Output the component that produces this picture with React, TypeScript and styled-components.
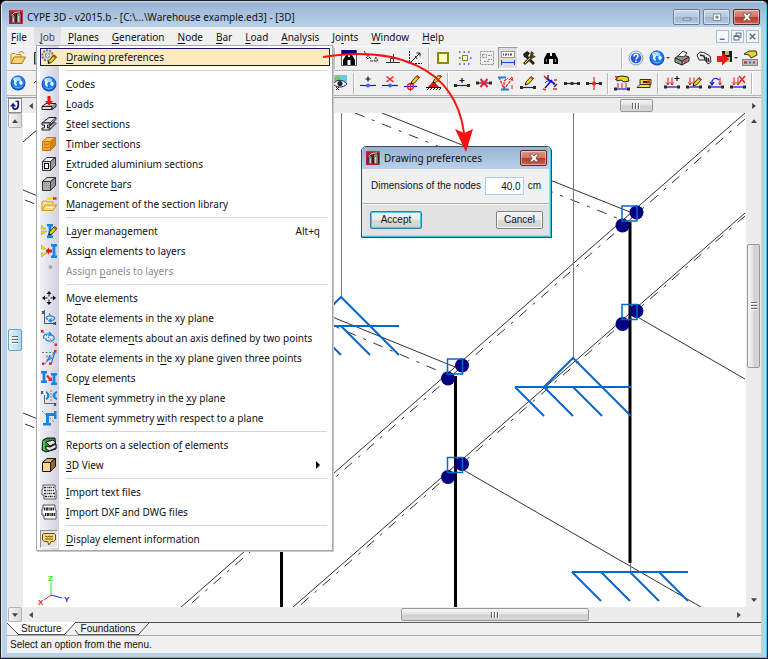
import React from "react";
import styled, { createGlobalStyle, css } from "styled-components";

const UI = `"Noto Sans", "Open Sans", sans-serif`;
const PLAIN = `"Liberation Sans", Arial, sans-serif`;

const Global = createGlobalStyle`
  *, *::before, *::after { box-sizing: border-box; }
  html, body, #root { height: 100%; margin: 0; }
  body { font: 10px/14px ${UI}; color: #111; background: #000; overflow: hidden; }
  button, input { font: inherit; color: inherit; margin: 0; }
  button { padding: 0; border: 0; background: none; cursor: default; }
  svg { display: block; flex: none; }
  u { text-underline-offset: 2px; text-decoration-thickness: 1px; }
`;

/* ---------- icons ---------- */

const Pencil = ({ x = 0, y = 0 }: { x?: number; y?: number }) => (
  <g transform={`translate(${x} ${y})`}>
    <path d="M1 9 2 6 7 0.5 9.5 2.5 4.5 8Z" fill="#e8d800" stroke="#222" strokeWidth="0.9" />
    <path d="M7 0.5 9.5 2.5 8.4 3.8 6 1.7Z" fill="#d33" />
    <path d="M1 9 1.6 7.2 2.8 8.3Z" fill="#000" />
  </g>
);
const Beam = ({ x = 0, h = 14 }: { x?: number; h?: number }) => (
  <path transform={`translate(${x} 1)`} d={`M0 0H6V2.5H4.4V${h - 2.5}H6V${h}H0V${h - 2.5}H1.6V2.5H0Z`} fill="#1484e8" />
);
const Box = ({ front, side, top, line }: Record<"front" | "side" | "top" | "line", string>) => (
  <g stroke={line} strokeWidth="1" strokeLinejoin="round">
    <path d="M1.5 5.5H9.5V14.5H1.5Z" fill={front} />
    <path d="M1.5 5.5 6 1.5H14.5L9.5 5.5Z" fill={top} />
    <path d="M9.5 5.5 14.5 1.5V9.5L9.5 14.5Z" fill={side} />
  </g>
);
const Bar = ({ y = 11 }: { y?: number }) => (
  <>
    <path d={`M1 ${y}H15`} stroke="#11e" strokeWidth="1.2" />
    <path d={`M0 ${y - 1.5}H3V${y + 1.5}H0ZM13 ${y - 1.5}H16V${y + 1.5}H13Z`} fill="#332c08" />
  </>
);
const Downs = ({ xs, y = 9, c = "#e11" }: { xs: number[]; y?: number; c?: string }) => (
  <>
    {xs.map((x) => (
      <path key={x} d={`M${x} ${y - 8}V${y - 1}M${x - 1.5} ${y - 3}L${x} ${y - 0.5}L${x + 1.5} ${y - 3}`} fill="none" stroke={c} />
    ))}
  </>
);
const Binoc = ({ c = "#000" }: { c?: string }) => (
  <path d="M4 3H7V6H9V3H12L15 9V14H10V9H6V14H1V9Z" fill={c} />
);
const Folder = () => (
  <>
    <path d="M1 13.5V4.5L2 3.5H5L6 4.5H11V7" fill="#fbe6a0" stroke="#b98a2a" />
    <path d="M1 13.5 4 7H15.5L12 13.5Z" fill="#f7cf72" stroke="#a97818" />
    <path d="M9 3Q12 0 14 3.5" stroke="#a97818" fill="none" />
  </>
);

const icons: Record<string, React.ReactNode> = {
  app: (
    <>
      <rect width="16" height="16" fill="#b4202c" />
      <path d="M0 0H16V16" fill="none" stroke="#e0555c" />
      <path d="M2.5 14V7L5 4.5 7 6.5V14M8.5 14V4L12.5 2 14 4.5V14" fill="#8c8a86" stroke="#2a1515" strokeWidth="1.2" />
      <path d="M3 6.5 6 3 13 2M5 9V14M11 7V14" stroke="#e8e2dc" fill="none" />
    </>
  ),
  gear: (
    <>
      <circle cx="6.5" cy="6.5" r="5.2" fill="#d8d8d8" stroke="#777" strokeWidth="2" strokeDasharray="2 1.2" />
      <circle cx="6.5" cy="6.5" r="2" fill="#fff" stroke="#888" />
      <path d="M3 3 10 10M10 3 3 10" stroke="#999" strokeWidth=".6" />
      <Pencil x={6} y={5.5} />
    </>
  ),
  globe: (
    <>
      <circle cx="8" cy="8" r="7.5" fill="#1050c0" />
      <circle cx="8" cy="7.3" r="6.5" fill="#1c7cf0" />
      <ellipse cx="7" cy="4" rx="4" ry="2" fill="#a8dcff" />
      <path d="M4 5 6 4 7 7 6 8 7 10 6 11 4 9ZM9 8 10 5 12 6 13 8 11 10.500Z" fill="#e4f6ff" />
      <path d="M3 11Q8 16 13 11Q8 13 3 11Z" fill="#48b0ff" />
    </>
  ),
  loads: (
    <>
      <path d="M1 10.5 5 7.5H15L11 10.5V13.5H1Z" fill="#ddd" stroke="#222" />
      <path d="M1 10.5H11V13.5L15 10.5V8" fill="#999" stroke="#222" />
      <path d="M6.5 0H9.5V5H12L8 9.5 4 5H6.5Z" fill="#e81010" />
    </>
  ),
  steel: (
    <g stroke="#222" strokeLinejoin="round">
      <path d="M1 7 8 1.5H15L9 7Z" fill="#ddd" />
      <path d="M6.5 12 13.5 6 15 7.5 9 13.5Z" fill="#aaa" />
      <path d="M1 7H9V9H6.5V12H9V14H1V12H3.5V9H1Z" fill="#eee" />
      <path d="M9 9 15 3.5V1.5" fill="none" />
    </g>
  ),
  timber: (
    <>
      <Box front="#f5a32a" side="#d98310" top="#ffc45c" line="#c8780c" />
      <path d="M3 8Q6 10 8 7.5M3 11Q6 13 8 10.5" stroke="#c8760c" fill="none" />
    </>
  ),
  aluminium: (
    <>
      <Box front="#ddd" side="#999" top="#eee" line="#333" />
      <rect x="3.5" y="7.5" width="4" height="5" fill="#fff" stroke="#111" />
    </>
  ),
  concrete: (
    <>
      <Box front="#b0b0b0" side="#909090" top="#d4d4d4" line="#333" />
      <path d="M3 7.5H8M3.5 9.5H9M3 11.5H8" stroke="#8a8a8a" strokeDasharray="1 1" />
    </>
  ),
  library: (
    <>
      <path d="M1 14V6L2 5H5L6 6H12V8" fill="#fbe6a0" stroke="#d8901a" />
      <path d="M1 14.5 4 9H15.5L12 14.5Z" fill="#fbd68a" stroke="#d8901a" />
      <path d="M6 2.5H12" stroke="#f4e000" strokeWidth="2.5" />
      <path d="M12 2.5H15.5" stroke="#e22" strokeWidth="2.5" />
      <path d="M5 11.5H12" stroke="#fff" />
    </>
  ),
  layer: (
    <>
      <path d="M0 2 5 6 0 6ZM0 8H6L0 12Z" fill="#f5e400" stroke="#8a8a6a" strokeWidth=".5" />
      <Beam x={6} />
      <Pencil x={6.5} y={3} />
    </>
  ),
  assign: (
    <>
      <path d="M0 2 5 6 0 6ZM0 10H6L0 14Z" fill="#f5e400" stroke="#8a8a6a" strokeWidth=".5" />
      <Beam x={10} />
      <path d="M4.5 8 8 4.5V6.5H11V9.5H8V11.5Z" fill="#e31414" />
    </>
  ),
  dot: <circle cx="9.5" cy="4" r="2" fill="#aaa" />,
  move: (
    <path
      d="M8 1 10.5 4H5.5ZM8 15 10.5 12H5.5ZM1 8 4 5.5V10.5ZM15 8 12 5.5V10.5ZM7.5 4H8.5V6.5H7.5ZM7.5 9.5H8.5V12H7.5ZM4 7.5H6.5V8.5H4ZM9.5 7.5H12V8.5H9.5Z"
      fill="#111"
    />
  ),
  rotxy: (
    <>
      <path d="M3.5 0V13.5H15" stroke="#555" fill="none" />
      <path d="M1 1 3 4M3 1 1 4M12.5 12 15 15M15 12 12.5 15" stroke="#333" />
      <path d="M7 9.5C3 8 7 5.5 10 6C16 7 14 11 9 10.5M10.5 8.5 8 10.5 10.5 12.5M8 3.5 10 6" stroke="#1484e8" fill="none" strokeWidth="1.2" />
    </>
  ),
  rotaxis: (
    <>
      <path d="M2 2 14 14" stroke="#777" strokeDasharray="2 1.5" />
      <path d="M3 9C1 4 7 3 10 4.5C15 7 14 11 9 11C6 11 4 10 5 8M8 2 11 5 7 6" stroke="#1484e8" fill="none" strokeWidth="1.2" />
      <path d="M0 0H2.5V2.5H0ZM13.5 13.5H16V16H13.5Z" fill="#e22" />
    </>
  ),
  rot3: (
    <>
      <path d="M1 2.5H13" stroke="#777" strokeDasharray="2 1.5" />
      <path d="M13 3 4 14M6 5V12" stroke="#777" strokeDasharray="3 1" />
      <path d="M14 2 10 14M9 5 7 10 11 8" stroke="#1484e8" fill="none" strokeWidth="1.3" />
      <path d="M13 0H15.5V2.5H13ZM1 12.5H3.5V15H1ZM8 12.5H10.5V15H8Z" fill="#e22" />
    </>
  ),
  copy: (
    <>
      <Beam x={0} h={12} />
      <g transform="translate(0 2)"><Beam x={10} h={12} /></g>
      <path d="M5 6 7 5 11 10 9 11ZM11 11H7L11 7Z" fill="#e22" />
    </>
  ),
  symxy: (
    <>
      <path d="M3.5 5V13.5H15" stroke="#666" fill="none" />
      <path d="M0 1 2 4M2 1 0 4M13 13 15 16M15 13 13 16" stroke="#333" />
      <path d="M5 1Q8 2 8.5 5.5Q8 9 5 10V8L6 7V4L5 3ZM16 1Q12 2 11.5 5.5Q12 9 16 10V8L14.5 7V4L16 3Z" fill="#1484e8" />
      <path d="M10 0V12" stroke="#777" strokeDasharray="2 1" />
    </>
  ),
  symplane: (
    <>
      <path d="M1 1 14 13" stroke="#777" strokeDasharray="2 1.5" />
      <path d="M5 3H13V1H15.5V9H13V6H8V13H10V15.5H2V13H5Z" fill="#1484e8" />
    </>
  ),
  reports: (
    <>
      <path d="M2 3 6 1H14L15 12 5 15 1 13Z" fill="#2c9a3a" stroke="#111" />
      <path d="M5 5 12 3 15 6 9 9ZM5 9 9 10 15 7V11L8 14 5 12Z" fill="#ddd" stroke="#111" />
      <path d="M3 4V13" stroke="#5f5" />
    </>
  ),
  view3d: <Box front="#f8d890" side="#8a6a30" top="#d9b060" line="#1c1408" />,
  textfile: (
    <>
      <path d="M2 1H14V5L15 6V15H3V11H1V5H2Z" fill="#fff" stroke="#555" />
      <path d="M3 3.5H13M3 6.5H13M3 9.5H14M4 12.5H14" stroke="#222" strokeWidth="1.5" strokeDasharray="2 .7 1 .8" />
    </>
  ),
  dxf: (
    <>
      <path d="M2 1H14V5L15 6V15H3V11H1V5H2Z" fill="#fff" stroke="#555" />
      <path d="M3 5H13M4 10.5H14" stroke="#222" strokeWidth="3" strokeDasharray="1.2 .7 2 .6" />
    </>
  ),
  info: (
    <>
      <path d="M2.5 2.5H13.5L14.5 4V9L12.5 10.5H10L8 14 6.5 10.5H3.5L1.5 9V4Z" fill="#ffd97a" stroke="#6a4c10" />
      <path d="M4 5 6.5 6 8 5 10 6 12 5M4 8H12" stroke="#6a4c10" fill="none" />
    </>
  ),
  open: <Folder />,
  newjob: <path d="M2.5 2.5H12V14H2.5Z" fill="#8fc46e" stroke="#234" />,
  half: <path d="M2 8 5 5M4 12C8 7 10 12 6 14H12M8 5H12" fill="none" stroke="#111" />,
  dxfview: (
    <>
      <rect x="0" y="0" width="16" height="16" fill="#fff" />
      <rect x="0" y="0" width="16" height="4" fill="#000080" />
      <path d="M5 5H7V7H9V5H11L14 10V15H9.5V10H6.5V15H2V10Z" fill="#000" />
      <path d="M.5 0V15.5H15.5V0" stroke="#555" fill="none" />
    </>
  ),
  cable: (
    <path d="M1 1 5 7M3 7 5 9 7 7M7 11H15L13 7 11 11M8 9 5 5" fill="none" stroke="#333" strokeDasharray="3 1" />
  ),
  angle: <path d="M1 12.5H15M8.5 12V4M5.5 12V8.5H8" stroke="#333" fill="none" />,
  polar: (
    <>
      <path d="M2.5 1V13.5H15" stroke="#222" fill="none" strokeDasharray="2 1" />
      <path d="M3 13 13 3M9.5 3H13V6.5M8 6 10 9" stroke="#222" fill="none" />
    </>
  ),
  square: <rect x="3" y="3" width="10" height="10" fill="#fff8c8" stroke="#8a8a10" strokeWidth="2" />,
  grid: (
    <>
      <path d="M2 2H15M2 8H4M13 8H15M2 14H15" stroke="#44f" strokeWidth="1.5" strokeDasharray="1.5 3" />
      <rect x="5.5" y="5.5" width="5" height="5" fill="#fff8c8" stroke="#8a8a10" />
    </>
  ),
  region: (
    <g stroke="#888" fill="none" strokeDasharray="2 1">
      <rect x="1.5" y="1.5" width="13" height="13" />
      <rect x="3.5" y="4.5" width="4" height="3" />
      <path d="M9 5.5H13M9 9.5H13M5 11.5H11" />
    </g>
  ),
  dims: (
    <>
      <rect x="1.5" y="1.5" width="13" height="6" fill="#fff" stroke="#999" />
      <path d="M3 4.5H13" stroke="#555" strokeWidth="2" strokeDasharray="1 1 2 1" />
      <path d="M1 12.5H15M1.5 10V15M14.5 10V15" stroke="#14e" fill="none" />
    </>
  ),
  tools: (
    <>
      <path d="M2 4 6 1 9 3 7 6 14 13 12 15 5 8 3 7Z" fill="#222" />
      <path d="M10 1 13 3 12 5 15 7 12 8 4 15 2 13 9 6Z" fill="#4a4012" />
      <path d="M4 13 9 8" stroke="#d8c860" />
    </>
  ),
  find: <><Binoc /><path d="M3.5 9V12M12.5 9V12" stroke="#888" /></>,
  help: (
    <>
      <circle cx="8" cy="8" r="7" fill="#e8ecfb" stroke="#8d96b8" />
      <circle cx="8" cy="8" r="5.3" fill="#2a5ae0" />
      <path d="M6 6.5C6 3.5 10.5 3.5 10 6.5C9.8 7.5 8.2 7.8 8 9.5M8 10.5V12" stroke="#fff" strokeWidth="1.5" fill="none" />
    </>
  ),
  printer: (
    <>
      <path d="M1 8 7 4 15 7V11L8 15 1 12Z" fill="#999" stroke="#222" />
      <path d="M4 6 9 1 13 3 10 7Z" fill="#fff" stroke="#333" />
      <path d="M1 8 8 11 15 7M8 11V15" stroke="#222" fill="none" />
      <path d="M3 11 6 12.5" stroke="#3c3" />
      <path d="M10 12 13 10.5" stroke="#e33" strokeWidth="1.5" />
    </>
  ),
  cards: (
    <>
      <path d="M1 5 4 2 9 3 14 6 15 12 12 14 9 10 3 10Z" fill="#e8e8e8" stroke="#333" />
      <path d="M4 5 8 6 9 10M10 7 11 12M12 8 13 12" stroke="#222" fill="none" strokeWidth="1.3" />
      <path d="M5 3.5H8" stroke="#fff" />
    </>
  ),
  exportjob: (
    <>
      <path d="M5 1H15V12H5Z" fill="#222" />
      <path d="M8 1H12V5H8ZM7 7H13V12H7Z" fill="#c8b870" />
      <path d="M0 6H5V2.5L12 9 5 15.5V12H0Z" fill="#f01818" />
    </>
  ),
  palette: (
    <>
      <rect x=".5" y="9.5" width="15" height="6" fill="#bbb" stroke="#888" />
      <path d="M2 12.5H5" stroke="#c22" strokeWidth="2" />
      <path d="M7 12.5H9" stroke="#46e" strokeWidth="2" />
      <path d="M11 12.5H13" stroke="#d33" strokeWidth="2" />
      <path d="M2 4 7 1H14L15 5 9 8 7 5Z" fill="#e8d820" stroke="#333" />
    </>
  ),
  eye: (
    <>
      <path d="M1 0H15V9L10 5Z" fill="#5ccfd8" />
      <path d="M0 2 6 1 9 5 1 7Z" fill="#7ac860" />
      <path d="M1 9C5 4 11 4 15 9C11 13 5 13 1 9Z" fill="#fff" stroke="#222" />
      <circle cx="8" cy="8.5" r="2.6" fill="#225" />
      <path d="M4 12 7 15M7 12 4 15" stroke="#222" />
    </>
  ),
  nodeadd: (
    <>
      <path d="M0 10.5H16" stroke="#11e" strokeWidth="1.2" />
      <circle cx="8" cy="10.5" r="2" fill="#46f" />
      <path d="M8 1.5V6.5M5.5 4H10.5" stroke="#111" strokeWidth="1.2" />
    </>
  ),
  nodedel: (
    <>
      <path d="M0 10.5H16" stroke="#11e" strokeWidth="1.2" />
      <circle cx="8" cy="10.5" r="2" fill="#46f" />
      <path d="M4.5 1.5 11.5 7M11.5 1.5 4.5 7" stroke="#e22" strokeWidth="1.5" />
    </>
  ),
  nodeedit: (
    <>
      <path d="M0 11.5H13" stroke="#11e" strokeWidth="1.2" />
      <circle cx="6.5" cy="11.5" r="3" fill="none" stroke="#e22" strokeWidth="1.3" />
      <path d="M6.5 8V16" stroke="#e22" />
      <Pencil x={6} y={0} />
    </>
  ),
  support: (
    <>
      <path d="M7.5 6 13 12H2Z" fill="#e81010" />
      <path d="M0 12.5H15M1 15 3 13M4 15 6 13M7 15 9 13M10 15 12 13M13 15 15 13" stroke="#111" />
      <Pencil x={6} y={-1} />
    </>
  ),
  baradd: <><Bar y={10.5} /><path d="M8 3V8M5.5 5.5H10.5" stroke="#111" strokeWidth="1.2" /></>,
  bardel: <><Bar y={8} /><path d="M4.5 4 11.5 12M11.5 4 4.5 12" stroke="#e22" strokeWidth="2" /></>,
  bargen: (
    <>
      <path d="M1 2 6 14 14 4M6 14V6L10 3" stroke="#e22" fill="none" strokeDasharray="3 1" strokeWidth="1.3" />
      <path d="M0 2.5H8M3 14.5H11" stroke="#1484e8" strokeWidth="2" />
      <path d="M11 5 14 2 15 6M14 10V14" stroke="#e22" fill="none" />
    </>
  ),
  baredit: <><Bar y={12.5} /><Pencil x={4} y={1} /></>,
  barrotate: (
    <>
      <path d="M3 13 10 5M4 3 13 9" stroke="#11e" strokeWidth="1.6" />
      <path d="M3 8C6 4 11 6 12 10" stroke="#11e" fill="none" />
      <path d="M2 1 5 4M1 14 4 15M11 14H15M12 5 15 5" stroke="#e22" strokeWidth="1.5" />
      <path d="M6 0V4M12 12 15 9" stroke="#222" strokeWidth="1.3" />
    </>
  ),
  barsplit: <><Bar y={8.5} /><rect x="6.5" y="7" width="3" height="3" fill="#332c08" /></>,
  barcross: <><Bar y={8.5} /><path d="M8 2V15" stroke="#e22" strokeWidth="1.2" /><circle cx="8" cy="8.5" r="2" fill="#e22" /></>,
  describe: (
    <>
      <path d="M2 2 8 1 14 2 15 6 10 7 7 5 3 6Z" fill="#e8d820" stroke="#222" />
      <path d="M1 1 4 4M1 5 4 2" stroke="#e22" />
      <path d="M4 8V13M8 8V13M12 8V13" stroke="#e11" />
      <Bar y={14} />
    </>
  ),
  material: (
    <>
      <path d="M4 9.5V4.5H15V9.5Z" fill="#e8d820" stroke="#333" />
      <path d="M1 12.5 4 9.5H14V12.5Z" fill="#f0e430" stroke="#333" />
      <path d="M7 6H11V8H7Z" fill="#222" />
      <path d="M11 5.5H14V8.5H11Z" fill="#d22" />
    </>
  ),
  loadadd: <><Bar y={12} /><Downs xs={[4, 8]} y={10.5} /><path d="M13 1V6M10.5 3.5H15.5" stroke="#111" strokeWidth="1.2" /></>,
  loadedit: <><Bar y={12} /><Downs xs={[4, 8]} y={10.5} /><Pencil x={6} y={2} /></>,
  loadcopy: <><Bar y={12} /><Downs xs={[12]} y={10.5} /><path d="M4 10V6C6 2 9 3 11 5M2 7 4 10 6 7" stroke="#11e" fill="none" strokeWidth="1.2" /></>,
  loaddel: <><Bar y={12} /><Downs xs={[4, 8]} y={10.5} /><path d="M9 1 15 8M15 1 9 8" stroke="#e22" strokeWidth="1.5" /></>,
  reset: (
    <>
      <path d="M12 1V9C11 15 4 14 4 9" fill="none" stroke="#16168c" strokeWidth="2.5" />
      <path d="M0 9.5 4.5 4 9 9.5ZM8 1H12V3H8Z" fill="#16168c" />
    </>
  ),
  minimize: <path d="M3 9.5H13V12H3Z" fill="#fff" stroke="#566" />,
  maximize: <path d="M3 4H13V12.5H3ZM6.5 7H9.5V9.5H6.5Z" fill="#fff" fillRule="evenodd" stroke="#566" />,
  close: <path d="M2 3H6L8 5.5 10 3H14L10.5 8 14 13H10L8 10.5 6 13H2L5.5 8Z" fill="#fff" stroke="#5a3030" strokeWidth=".8" />,
  mdiMin: <path d="M4 12H11" stroke="#5a6b80" strokeWidth="2" />,
  mdiRestore: <path d="M6 6V3H13V9H10M3 7H10V13H3ZM3 8H10" fill="none" stroke="#5a6b80" strokeWidth="1.5" />,
  mdiClose: <path d="M4 4 12 12M12 4 4 12" stroke="#5a6b80" strokeWidth="2" />,
};

const Icon = ({ name, size = 16 }: { name: string; size?: number }) => (
  <svg width={size} height={size} viewBox="0 0 16 16" fill="none" aria-hidden="true">
    {icons[name]}
  </svg>
);

const Mnemonic = ({ text }: { text: string }) => {
  const at = text.indexOf("&");
  if (at < 0) return <>{text}</>;
  return (
    <>
      {text.slice(0, at)}
      <u>{text[at + 1]}</u>
      {text.slice(at + 2)}
    </>
  );
};

/* ---------- window frame ---------- */

const Frame = styled.div`
  position: relative;
  display: flex;
  flex-direction: column;
  height: 100vh;
  border: 1px solid #1d1d22;
  border-radius: 6px 6px 0 0;
  background: #b9d1ea;
  padding: 0 6px 5px;
  box-shadow: inset -1px -1px 0 #35c8e0, inset 1px 1px 0 #e6eef8;
`;

const TitleBar = styled.header`
  display: flex;
  align-items: center;
  flex: none;
  gap: 4px;
  height: 26px;
  margin: 0 -5px;
  padding: 5px 6px 0 7px;
  border-radius: 5px 5px 0 0;
  background: linear-gradient(#dfe9f4 0, #98b3d2 2px, #a9c2de 50%, #b9d1ea);
`;

const Title = styled.h1`
  flex: 1;
  margin: 0;
  font: 10px/16px ${UI};
`;

const Captions = styled.div`
  display: flex;
  gap: 3px;
`;

const CaptionButton = styled.button<{ $danger?: boolean }>`
  display: flex;
  align-items: center;
  justify-content: center;
  width: 27px;
  height: 16px;
  border: 1px solid ${(p) => (p.$danger ? "#5a2a2a" : "#6b7e94")};
  border-radius: 2px;
  box-shadow: inset 0 0 0 1px rgba(255, 255, 255, 0.45);
  background: ${(p) =>
    p.$danger
      ? "linear-gradient(#dd9a8c, #cf7462 48%, #b43c28 52%, #c9604c)"
      : "linear-gradient(#c9d9ea, #b4c8de 48%, #9cb4cf 52%, #b3cbe4)"};
`;

const Client = styled.div`
  display: flex;
  flex-direction: column;
  flex: 1;
  min-height: 0;
  background: #f0f0f0;
`;

const MenuBar = styled.nav`
  position: relative;
  z-index: 2;
  display: flex;
  flex: none;
  gap: 1px;
  height: 19px;
  padding-right: 2px;
  margin-left: -2px;
`;

const MenuSlot = styled.div`
  position: relative;
  display: flex;
`;

const MenuButton = styled.button<{ $open?: boolean }>`
  padding: 0 6px;
  color: ${(p) => (p.$open ? "#445" : "#111")};
  background: ${(p) => (p.$open ? "linear-gradient(#dcdce2, #e6e6ea)" : "none")};
`;

const MdiButtons = styled.div`
  display: flex;
  align-items: center;
  gap: 2px;
  margin-left: auto;
`;

const MdiButton = styled.button`
  display: flex;
  align-items: center;
  justify-content: center;
  width: 13px;
  height: 13px;
  border: 1px solid #a9bccf;
  background: #f3f8fd;
`;

/* ---------- drop-down menu ---------- */

const Popup = styled.div`
  position: absolute;
  top: 18px;
  left: 2px;
  display: flex;
  flex-direction: column;
  width: 297px;
  padding: 1px 2px 1px 3px;
  border: 1px solid #a8a8ac;
  background: linear-gradient(90deg, #fff 3px, #efeff6 3px, #d2d2e0 22px, #fff 22px);
  box-shadow: 1px 1px 0 #c8c8cc;
`;

const Entry = styled.button<{ $hot?: boolean; $off?: boolean }>`
  display: flex;
  align-items: center;
  height: 20px;
  padding: 0 10px 0 0;
  text-align: left;
  color: ${(p) => (p.$off ? "#8c8c8c" : "#111")};
  ${(p) =>
    p.$hot &&
    css`
      height: 18px;
      margin: 1px 0;
      background: #ffe9c0;
      box-shadow: inset 0 0 0 1px #12126e;
    `}
`;

const EntryIcon = styled.span<{ $checked?: boolean }>`
  display: flex;
  align-items: center;
  justify-content: center;
  width: 18px;
  height: 18px;
  margin-right: 8px;
  ${(p) =>
    p.$checked &&
    css`
      border: 1px solid #8e8e98;
      border-right-color: #fff;
      border-bottom-color: #fff;
      background: #e2e2e8;
    `}
`;

const EntryText = styled.span`
  flex: 1;
  white-space: nowrap;
`;

const Divider = styled.hr`
  width: auto;
  height: 1px;
  margin: 3px 3px 3px 26px;
  border: 0;
  background: #d3d3e2;
`;

/* ---------- toolbars ---------- */

const ToolBar = styled.div`
  display: flex;
  align-items: center;
  flex: none;
  height: 25px;
  border-bottom: 1px solid #b4b4b4;
  box-shadow: inset 0 1px 0 #fafafa;
`;

const LeadTools = styled.div<{ $basis: number }>`
  display: flex;
  flex: 0 0 ${(p) => p.$basis}px;
`;

const Push = styled.span`
  margin-left: auto;
`;

const Tool = styled.button<{ $down?: boolean }>`
  display: flex;
  align-items: center;
  justify-content: center;
  flex: none;
  width: 22px;
  height: 22px;
  ${(p) =>
    p.$down &&
    css`
      width: 20px;
      border: 1px solid #9a9a9a;
      border-right-color: #fff;
      border-bottom-color: #fff;
      background: #dedede;
    `}
`;

const SplitTool = styled(Tool)`
  width: 24px;
  gap: 1px;
  &::after {
    content: "";
    border: 2px solid transparent;
    border-top-color: #444;
    border-bottom: 0;
  }
`;

const Break = styled.span`
  flex: none;
  width: 2px;
  height: 21px;
  margin: 0 2px;
  border-left: 1px solid #b8b8b8;
  border-right: 1px solid #fff;
`;

/* ---------- viewport and scroll bars ---------- */

const Work = styled.main`
  display: grid;
  flex: 1;
  min-height: 0;
  grid-template: 15px minmax(0, 1fr) 15px / 16px minmax(0, 1fr) 15px;
  margin-top: 1px;
  border-top: 1px solid #9c9c9c;
  background: #ececec;
`;

const Corner = styled.button`
  display: flex;
  align-items: center;
  justify-content: center;
  margin: 0 1px;
  border: 1px solid #8c8c8c;
  background: #fafafa;
`;

const Scroll = styled.div<{ $vertical?: boolean; $wide?: boolean }>`
  display: flex;
  flex-direction: ${(p) => (p.$vertical ? "column" : "row")};
  min-width: 0;
  min-height: 0;
  ${(p) => p.$wide && "grid-column: span 2;"}
`;

const arrowShape = {
  up: "M4 0 8 5H0Z",
  down: "M0 0H8L4 5Z",
  left: "M5 0V8L0 4Z",
  right: "M0 0V8L5 4Z",
};

const ArrowButton = styled.button<{ $boxed?: boolean }>`
  display: flex;
  align-items: center;
  justify-content: center;
  flex: none;
  width: 15px;
  height: 15px;
  ${(p) =>
    p.$boxed &&
    css`
      width: 14px;
      margin: 0 1px;
      border: 1px solid #b4b4b4;
      border-radius: 2px;
      background: linear-gradient(90deg, #f6f6f6, #d8d8d8);
    `}
`;

const Arrow = ({ dir, boxed }: { dir: keyof typeof arrowShape; boxed?: boolean }) => {
  const tall = dir === "left" || dir === "right";
  return (
    <ArrowButton $boxed={boxed} aria-label={`Scroll ${dir}`}>
      <svg width={tall ? 4 : 6} height={tall ? 6 : 4} viewBox={tall ? "0 0 5 8" : "0 0 8 5"}>
        <path d={arrowShape[dir]} fill="#444" />
      </svg>
    </ArrowButton>
  );
};

const Space = styled.span<{ $grow: number }>`
  flex: ${(p) => p.$grow} 1 0;
`;

const Thumb = styled.span<{ $grow: number; $vertical?: boolean; $active?: boolean }>`
  display: flex;
  flex: ${(p) => p.$grow} 1 0;
  flex-direction: ${(p) => (p.$vertical ? "column" : "row")};
  align-items: center;
  justify-content: center;
  gap: 1px;
  margin: 1px;
  border: 1px solid ${(p) => (p.$active ? "#6aa4c4" : "#989898")};
  border-radius: 2px;
  background: linear-gradient(
    ${(p) => (p.$vertical ? "90deg" : "180deg")},
    ${(p) => (p.$active ? "#e8f6fd, #a9d8ee" : "#f6f6f6, #e2e2e2 48%, #cfcfcf 52%, #d6d6d6")}
  );
`;

const Ridge = styled.i<{ $vertical?: boolean }>`
  width: ${(p) => (p.$vertical ? "6px" : "2px")};
  height: ${(p) => (p.$vertical ? "2px" : "6px")};
  background: #666;
  border: 0 solid #fff;
  ${(p) => (p.$vertical ? "border-bottom-width: 1px;" : "border-right-width: 1px;")}
`;

const Grip = (p: { grow: number; vertical?: boolean; active?: boolean }) => (
  <Thumb $grow={p.grow} $vertical={p.vertical} $active={p.active}>
    <Ridge $vertical={p.vertical} />
    <Ridge $vertical={p.vertical} />
    <Ridge $vertical={p.vertical} />
  </Thumb>
);

const Drawing = styled.svg`
  width: 100%;
  height: 100%;
  background: #fff;
`;

const blue = "#0a66c8";

const Hatch = ({ x, y }: { x: number; y: number }) => (
  <path
    d={`M${x} ${y}h116M${x} ${y}l29 29M${x + 29} ${y}l29 29M${x + 58} ${y}l29 29M${x + 87} ${y}l29 29`}
    stroke={blue}
    strokeWidth="2"
  />
);

const Support = ({ x, y }: { x: number; y: number }) => (
  <>
    <Hatch x={x - 58} y={y + 29} />
    <path d={`M${x - 29} ${y + 29}L${x} ${y}L${x + 30} ${y + 30}`} stroke={blue} strokeWidth="2" />
  </>
);

const Joint = ({ x, y }: { x: number; y: number }) => (
  <>
    <circle cx={x + 7} cy={y - 1} r="7" fill="#000080" />
    <circle cx={x - 7} cy={y + 12} r="7" fill="#000080" />
    <rect x={x - 7.5} y={y - 7.5} width="15" height="15" stroke={blue} strokeWidth="1.5" />
  </>
);

const Model = () => (
  <Drawing fill="none" aria-label="3D model view">
    <g transform="translate(-23 -113)">
      <g stroke="#333" strokeWidth="1">
        <path d="M745 113 180 608M745 213 293 607" />
        <path d="M23 142 70 101M23 190 60 205M23 413 60 428" />
        <path d="M382 113 630 212M320 312 455 367M460 468 701 607M634 315 745 379" />
      </g>
      <g stroke="#333" strokeWidth="1" strokeDasharray="10 8 3 8">
        <path d="M745 119 186 608M745 216 297 608" />
        <path d="M25 200 60 214M25 424 60 438" />
        <path d="M355 113 622 220M320 320 448 375" />
      </g>
      <path d="M341.5 113V298M573.5 113V358M630.5 562V572" stroke="#777" />
      <path d="M455.5 376V608M630 222V563M281.5 540V608" stroke="#000" strokeWidth="3" />
      <Support x={341} y={297} />
      <Support x={573} y={358} />
      <Hatch x={572} y={572} />
      <Joint x={629.5} y={213.5} />
      <Joint x={629.5} y={312} />
      <Joint x={455} y={366.5} />
      <Joint x={455} y={465} />
      <path d="M51 595V582" stroke="#2e2" />
      <path d="M51 595 62 598" stroke="#22e" />
      <path d="M51 595 44 600" stroke="#e22" />
      <g fontFamily={PLAIN} fontSize="8" fontWeight="bold">
        <text x="48" y="581" fill="#1fe01f">Z</text>
        <text x="64" y="602" fill="#2222e0">Y</text>
        <text x="38" y="605" fill="#e02222">X</text>
      </g>
    </g>
  </Drawing>
);

/* ---------- sheet tabs and status bar ---------- */

const Tabs = styled.div`
  display: flex;
  align-items: stretch;
  flex: none;
  height: 14px;
  border-bottom: 1px solid #a8a8a8;
  font: 10px/12px ${PLAIN};
`;

const Tab = styled.button<{ $active?: boolean }>`
  display: flex;
  border-top: 1px solid ${(p) => (p.$active ? "#fff" : "#555")};
`;

const TabText = styled.span<{ $active?: boolean }>`
  padding: 0 2px;
  height: 12px;
  border-bottom: 1px solid #555;
  background: ${(p) => (p.$active ? "#fff" : "transparent")};
`;

const TabRule = styled.span`
  flex: 1;
  border-top: 1px solid #555;
`;

const Status = styled.footer`
  flex: none;
  height: 17px;
  padding: 2px 3px;
  font: 10px/14px ${PLAIN};
`;

/* ---------- preferences dialog ---------- */

const Dialog = styled.form`
  position: absolute;
  z-index: 3;
  top: 145px;
  left: 360px;
  width: 191px;
  border: 1px solid #3c4a58;
  border-radius: 5px 5px 0 0;
  padding: 0 2px 2px 1px;
  background: #b9d1ea;
  box-shadow: inset -1px -1px 0 #35c8e0, inset 1px 1px 0 #e6eef8;
`;

const DialogTitle = styled.div`
  display: flex;
  align-items: center;
  gap: 4px;
  height: 22px;
  margin-left: -1px;
  padding: 0 2px 0 4px;
  background: linear-gradient(#98b3d2, #b9d1ea);
  border-radius: 4px 4px 0 0;
`;

const DialogName = styled.h2`
  flex: 1;
  margin: 0;
  font: 10px/16px ${UI};
`;

const DialogBody = styled.div`
  display: flex;
  align-items: center;
  gap: 4px;
  padding: 8px 8px 8px 8px;
  background: #f0f0f0;
  border-bottom: 1px solid #aaa;
  font: 10px/14px ${PLAIN};
  white-space: nowrap;
`;

const NumberBox = styled.input`
  flex: 1;
  min-width: 0;
  height: 18px;
  padding: 0 2px;
  border: 1px solid #a8cfe8;
  background: #fff;
  text-align: right;
  outline: 0;
`;

const DialogActions = styled.div`
  display: flex;
  justify-content: space-between;
  padding: 6px 6px 6px 7px;
  background: #e2e2e2;
  border-top: 1px solid #f8f8f8;
  font: 10px/14px ${PLAIN};
`;

const PushButton = styled.button<{ $primary?: boolean }>`
  height: 18px;
  min-width: ${(p) => (p.$primary ? 52 : 47)}px;
  border: 1px solid ${(p) => (p.$primary ? "#2f7fa8" : "#808080")};
  border-radius: 2px;
  background: linear-gradient(#f3f3f3, #ebebeb 48%, #dadada 52%, #d2d2d2);
  box-shadow: inset 0 0 0 1px ${(p) => (p.$primary ? "#4cc8f0" : "#fbfbfb")};
`;

const RedArrow = styled.svg`
  position: absolute;
  z-index: 4;
  top: 40px;
  left: 320px;
  pointer-events: none;
`;

/* ---------- content ---------- */

const menus = ["&File", "&Job", "&Planes", "&Generation", "&Node", "&Bar", "&Load", "&Analysis", "Jo&ints", "&Window", "&Help"];

type Item = { icon: string; text: string; keys?: string; hot?: boolean; off?: boolean; sub?: boolean; checked?: boolean };

const jobMenu: Item[][] = [
  [{ icon: "gear", text: "&Drawing preferences", hot: true }],
  [
    { icon: "globe", text: "&Codes" },
    { icon: "loads", text: "&Loads" },
    { icon: "steel", text: "&Steel sections" },
    { icon: "timber", text: "&Timber sections" },
    { icon: "aluminium", text: "&Extruded aluminium sections" },
    { icon: "concrete", text: "Concrete &bars" },
    { icon: "library", text: "&Management of the section library" },
  ],
  [
    { icon: "layer", text: "L&ayer management", keys: "Alt+q" },
    { icon: "assign", text: "Assi&gn elements to layers" },
    { icon: "dot", text: "Assign &panels to layers", off: true },
  ],
  [
    { icon: "move", text: "M&ove elements" },
    { icon: "rotxy", text: "&Rotate elements in the xy plane" },
    { icon: "rotaxis", text: "Rotate eleme&nts about an axis defined by two points" },
    { icon: "rot3", text: "Rotate elements in t&he xy plane given three points" },
    { icon: "copy", text: "Cop&y elements" },
    { icon: "symxy", text: "Element symmetry in the &xy plane" },
    { icon: "symplane", text: "Element symmetry &with respect to a plane" },
  ],
  [
    { icon: "reports", text: "Reports on a selection o&f elements" },
    { icon: "view3d", text: "&3D View", sub: true },
  ],
  [
    { icon: "textfile", text: "&Import text files" },
    { icon: "dxf", text: "&Import DXF and DWG files" },
  ],
  [{ icon: "info", text: "&Display element information", checked: true }],
];

const Tools = ({ names, down }: { names: string[]; down?: string }) => (
  <>
    {names.map((n) => (
      <Tool key={n} $down={n === down} aria-label={n}>
        <Icon name={n} />
      </Tool>
    ))}
  </>
);

const JobMenu = () => (
  <Popup>
    {jobMenu.map((group, i) => (
      <React.Fragment key={i}>
        {i > 0 && <Divider />}
        {group.map((item) => (
          <Entry key={item.text} $hot={item.hot} $off={item.off} disabled={item.off}>
            <EntryIcon $checked={item.checked}>
              <Icon name={item.icon} />
            </EntryIcon>
            <EntryText>
              <Mnemonic text={item.text} />
            </EntryText>
            {item.keys}
            {item.sub && (
              <svg width="4" height="8" viewBox="0 0 4 8">
                <path d="M0 0 4 4 0 8Z" fill="#000" />
              </svg>
            )}
          </Entry>
        ))}
      </React.Fragment>
    ))}
  </Popup>
);

export default function App() {
  return (
    <>
      <Global />
      <Frame>
        <TitleBar>
          <Icon name="app" size={14} />
          <Title>CYPE 3D - v2015.b - [C:\...\Warehouse example.ed3] - [3D]</Title>
          <Captions>
            <CaptionButton aria-label="Minimize"><Icon name="minimize" size={12} /></CaptionButton>
            <CaptionButton aria-label="Maximize"><Icon name="maximize" size={12} /></CaptionButton>
            <CaptionButton $danger aria-label="Close"><Icon name="close" size={12} /></CaptionButton>
          </Captions>
        </TitleBar>

        <Client>
          <MenuBar>
            {menus.map((m) => (
              <MenuSlot key={m}>
                <MenuButton $open={m === "&Job"}>
                  <Mnemonic text={m} />
                </MenuButton>
                {m === "&Job" && <JobMenu />}
              </MenuSlot>
            ))}
            <MdiButtons>
              <MdiButton aria-label="Minimize view"><Icon name="mdiMin" size={11} /></MdiButton>
              <MdiButton aria-label="Restore view"><Icon name="mdiRestore" size={11} /></MdiButton>
              <MdiButton aria-label="Close view"><Icon name="mdiClose" size={11} /></MdiButton>
            </MdiButtons>
          </MenuBar>

          <ToolBar>
            <LeadTools $basis={325}>
              <Tools names={["open", "newjob"]} />
            </LeadTools>
            <Break />
            <Tools names={["dxfview", "cable", "angle", "polar"]} />
            <Break />
            <Tools names={["square", "grid", "region", "dims", "tools", "find"]} down="dims" />
            <Push />
            <Break />
            <Tools names={["help"]} />
            <SplitTool aria-label="Web"><Icon name="globe" /></SplitTool>
            <Tools names={["printer", "cards"]} />
            <SplitTool aria-label="Export"><Icon name="exportjob" /></SplitTool>
            <Tools names={["palette"]} />
          </ToolBar>

          <ToolBar>
            <LeadTools $basis={322}>
              <Tools names={["globe", "half"]} />
            </LeadTools>
            <Tools names={["eye"]} />
            <Break />
            <Tools names={["nodeadd", "nodedel", "nodeedit", "support"]} />
            <Break />
            <Tools names={["baradd", "bardel", "bargen", "baredit", "barrotate", "barsplit", "barcross"]} />
            <Break />
            <Tools names={["describe", "material"]} />
            <Break />
            <Tools names={["loadadd", "loadedit", "loadcopy", "loaddel"]} />
            <Break />
          </ToolBar>

          <Work>
            <Corner aria-label="Reset view"><Icon name="reset" size={11} /></Corner>
            <Scroll $wide>
              <Arrow dir="left" />
              <Space $grow={583} />
              <Grip grow={32} />
              <Space $grow={92} />
              <Arrow dir="right" />
            </Scroll>
            <Scroll $vertical>
              <Arrow dir="up" boxed />
              <Space $grow={201} />
              <Grip grow={20} vertical active />
              <Space $grow={257} />
            </Scroll>
            <Model />
            <Scroll $vertical>
              <Arrow dir="up" />
              <Space $grow={116} />
              <Grip grow={124} vertical />
              <Space $grow={226} />
              <Arrow dir="down" />
            </Scroll>
            <Arrow dir="down" boxed />
            <Scroll>
              <Arrow dir="left" />
              <Space $grow={363} />
              <Grip grow={186} />
              <Space $grow={141} />
              <Arrow dir="right" />
            </Scroll>
          </Work>

          <Tabs>
            <Tab $active>
              <svg width="12" height="12"><path d="M0 0H12V12Z" fill="#fff" /><path d="M0 0 12 12" stroke="#444" /></svg>
              <TabText $active>Structure</TabText>
              <svg width="11" height="12"><path d="M0 0H11L0 12Z" fill="#fff" /><path d="M0 12 11 0" stroke="#444" /></svg>
            </Tab>
            <Tab>
              <svg width="4" height="12"><path d="M0 7 4 12" stroke="#444" /></svg>
              <TabText>Foundations</TabText>
              <svg width="11" height="12"><path d="M0 12 11 0" stroke="#444" /></svg>
            </Tab>
            <TabRule />
          </Tabs>
          <Status>Select an option from the menu.</Status>
        </Client>

        <Dialog onSubmit={(e) => e.preventDefault()}>
          <DialogTitle>
            <Icon name="app" size={14} />
            <DialogName>Drawing preferences</DialogName>
            <CaptionButton type="button" $danger aria-label="Close dialog"><Icon name="close" size={12} /></CaptionButton>
          </DialogTitle>
          <DialogBody>
            <label htmlFor="node-size">Dimensions of the nodes</label>
            <NumberBox id="node-size" defaultValue="40.0" />
            <span>cm</span>
          </DialogBody>
          <DialogActions>
            <PushButton $primary type="submit">Accept</PushButton>
            <PushButton type="button">Cancel</PushButton>
          </DialogActions>
        </Dialog>

        <RedArrow width="160" height="115" fill="none" aria-hidden="true">
          <path d="M2 16C72 5 134 24 143 92" stroke="#fa1010" strokeWidth="2" />
          <path d="M145 111 134 88 143 92 152 88Z" fill="#fa1010" />
        </RedArrow>
      </Frame>
    </>
  );
}
